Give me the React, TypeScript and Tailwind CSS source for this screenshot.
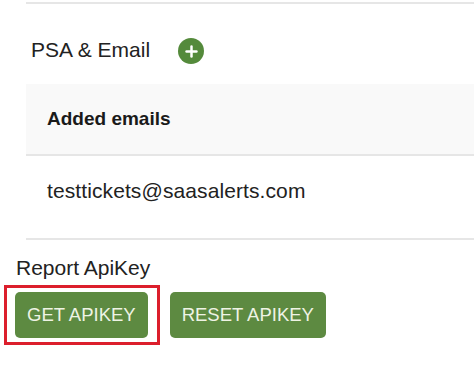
import { Plus } from 'lucide-react'

function ApiButton({ label }: { label: string }) {
  return (
    <button className="h-[46px] px-[12px] rounded-[5px] bg-[#5d8a41] text-[#eef3e4] text-[18.5px] leading-none whitespace-nowrap">
      {label}
    </button>
  )
}

export default function App() {
  return (
    <div className="w-[474px] h-[374px] bg-white text-[#222] font-['Liberation_Sans',Arial,sans-serif] overflow-hidden">
      <div className="ml-[26px] mt-[2px] h-[2px] bg-[#e6e6e6]" />

      <div className="ml-[31px] mt-[33px] h-[26px] flex items-center">
        <span className="text-[21px] leading-[24px]">PSA &amp; Email</span>
        <span className="ml-[28px] mt-[2px] w-[26px] h-[26px] rounded-full bg-[#548a3b] flex items-center justify-center text-white">
          <Plus className="w-[17px] h-[17px]" strokeWidth={3.5} />
        </span>
      </div>

      <div className="ml-[26px] mt-[21px]">
        <div className="h-[72px] bg-[#f9f9f9] border-b-2 border-[#e6e6e6] flex items-center pl-[21px]">
          <span className="text-[19px] font-bold leading-[24px] text-[#1a1a1a]">Added emails</span>
        </div>
        <div className="h-[84px] border-b-2 border-[#e6e6e6] pl-[21px] pt-[23px]">
          <span className="text-[21px] leading-[24px] tracking-[0.1px]">testtickets@saasalerts.com</span>
        </div>
      </div>

      <div className="ml-[16px] mt-[16px] text-[21px] leading-[24px]">Report ApiKey</div>

      <div className="ml-[15px] mt-[12px] flex gap-[22px]">
        <div className="relative">
          <ApiButton label="GET APIKEY" />
          <div className="absolute -left-[11px] -right-[12px] -top-[7px] -bottom-[7px] border-[3px] border-[#dc1f2c] pointer-events-none" />
        </div>
        <ApiButton label="RESET APIKEY" />
      </div>
    </div>
  )
}
